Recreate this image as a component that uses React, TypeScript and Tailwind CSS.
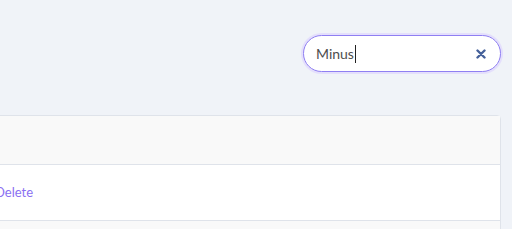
import React from "react";

export default function App() {
  return (
    <div className="w-[512px] h-[229px] overflow-hidden bg-[#f0f3f8]" style={{ fontFamily: "Lato, 'Open Sans', sans-serif" }}>
      <div className="flex justify-end pt-[35px] pr-[11px]">
        <div className="relative flex items-center w-[198px] h-[37px] rounded-full bg-white border border-[#8f7ff2] shadow-[0_0_0_2px_#e4dffc] pl-[12px] pr-[14px]">
          <span className="text-[14px] text-[#4d4d4d] leading-none">Minus</span>
          <span className="w-px h-[18px] bg-[#222] ml-[1px]"></span>
          <div className="flex-1"></div>
          <svg width="10" height="10" viewBox="0 0 10 10" className="text-[#45619a]">
            <path d="M1.5 1.5 L8.5 8.5 M8.5 1.5 L1.5 8.5" stroke="currentColor" strokeWidth="2.4" strokeLinecap="round" />
          </svg>
        </div>
      </div>
      <div className="mt-[43px] -ml-[20px] mr-[11px] rounded-tr-[4px] border border-[#dfe3ea] bg-white">
        <div className="h-[49px] bg-[#f9f9f9] border-b border-[#dfe3ea]"></div>
        <div className="h-[56px] bg-white border-b border-[#dfe3ea] flex items-center">
          <span className="ml-[14px] pt-[1px] text-[13px] text-[#8a6ff2]">Delete</span>
        </div>
        <div className="h-[20px] bg-[#f9f9f9]"></div>
      </div>
    </div>
  );
}
